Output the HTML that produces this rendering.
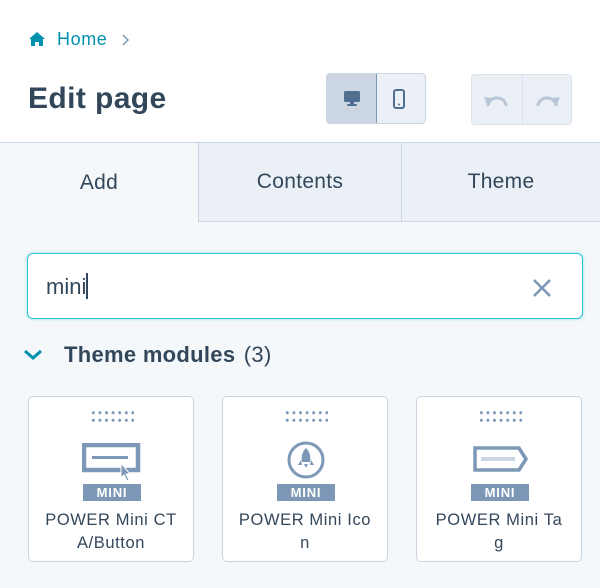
<!DOCTYPE html><html><head><style>
*{box-sizing:border-box;margin:0;padding:0}
body{width:600px;height:588px;overflow:hidden;background:#f5f8fa;font-family:"Liberation Sans",sans-serif;color:#33475b;position:relative}
.top{position:absolute;left:0;top:0;width:600px;height:143px;background:#fff;border-bottom:1px solid #cbd6e2}
.abs{position:absolute}
.tab{position:absolute;top:143px;height:79px;font-size:21px;letter-spacing:.3px;display:flex;align-items:center;justify-content:center;border-bottom:1px solid #cbd6e2}
.card{position:absolute;top:396px;width:166px;height:166px;background:#fff;border:1px solid #cbd6e2;border-radius:5px}
.dots{position:absolute;left:61px;top:12px;width:44px;height:14px;background-image:radial-gradient(circle,#7c98b6 1.4px,transparent 1.7px);background-size:6.6px 7.5px}
.mini{position:absolute;left:54px;top:87px;width:58px;height:17px;background:#7c98b6;color:#fff;font-weight:bold;font-size:13px;text-align:center;line-height:17px;letter-spacing:.8px}
.lbl{position:absolute;left:0;top:112px;width:100%;text-align:center;font-size:16.5px;letter-spacing:.6px;line-height:23px;white-space:nowrap}
</style></head><body>
<div class="top"></div>
<svg class="abs" style="left:29px;top:32px" width="16" height="14" viewBox="0 0 16 14"><path d="M8 0L0 7h2v7h4v-4h4v4h4V7h2z" fill="#0091ae"/></svg>
<div class="abs" style="left:57px;top:29px;font-size:18px;letter-spacing:.6px;color:#0091ae">Home</div>
<svg class="abs" style="left:121px;top:34px" width="8" height="12"><path d="M2 1l5 5-5 5" stroke="#7c98b6" stroke-width="1.5" fill="none"/></svg>
<div class="abs" style="left:28px;top:82px;font-size:30px;letter-spacing:.4px;font-weight:bold;color:#33475b">Edit page</div>
<div class="abs" style="left:326px;top:73px;width:100px;height:51px;border:1px solid #cbd6e2;border-radius:4px;background:#eaf0f6;overflow:hidden">
<div style="position:absolute;left:0;top:0;width:50px;height:51px;background:#cbd6e2;border-right:1px solid #7c98b6"></div>
<svg style="position:absolute;left:16px;top:16px" width="18" height="18"><rect x="1" y="1" width="16" height="11" rx="1.5" fill="#516f90"/><rect x="7" y="12" width="4" height="2" fill="#516f90"/><rect x="4" y="14" width="10" height="2" rx="1" fill="#516f90"/></svg>
<svg style="position:absolute;left:66px;top:15px" width="12" height="20"><rect x="1" y="1" width="10" height="18" rx="2" stroke="#516f90" stroke-width="2" fill="none"/><circle cx="6" cy="15.5" r="1" fill="#516f90"/></svg>
</div>
<div class="abs" style="left:471px;top:74px;width:101px;height:51px;border:1px solid #dbe3ec;border-radius:4px;background:#eaf0f6">
<div style="position:absolute;left:50px;top:0;width:1px;height:49px;background:#dbe3ec"></div>
<svg style="position:absolute;left:12px;top:18px" width="26" height="16"><path d="M4 13a9 8 0 0 1 18 0" stroke="#b8c7d8" stroke-width="3" fill="none"/><path d="M0 4l8 1-5 7z" fill="#b8c7d8"/></svg>
<svg style="position:absolute;left:62px;top:18px" width="26" height="16"><path d="M4 13a9 8 0 0 1 18 0" stroke="#b8c7d8" stroke-width="3" fill="none"/><path d="M26 4l-8 1 5 7z" fill="#b8c7d8"/></svg>
</div>
<div class="tab" style="left:0;width:198px;background:#f5f8fa;border-bottom:none">Add</div>
<div class="tab" style="left:198px;width:203px;background:#eaf0f6;border-left:1px solid #cbd6e2">Contents</div>
<div class="tab" style="left:401px;width:199px;background:#eaf0f6;border-left:1px solid #cbd6e2">Theme</div>
<div class="abs" style="left:27px;top:253px;width:556px;height:66px;background:#fff;border:1px solid #2fc6dc;border-radius:6px;box-shadow:0 0 3px #8be0ec"></div>
<div class="abs" style="left:46px;top:273px;font-size:22px">mini<span style="display:inline-block;width:1.5px;height:26px;background:#33475b;vertical-align:-5px"></span></div>
<svg class="abs" style="left:532px;top:278px" width="20" height="20"><path d="M2 2l16 16M18 2L2 18" stroke="#7c98b6" stroke-width="2.6"/></svg>
<svg class="abs" style="left:23px;top:349px" width="20" height="12"><path d="M2 2l8 7 8-7" stroke="#0091ae" stroke-width="3" fill="none"/></svg>
<div class="abs" style="left:64px;top:342px;font-size:22px;letter-spacing:.3px;font-weight:bold">Theme modules <span style="font-weight:normal;margin-left:2px">(3)</span></div>

<div class="card" style="left:28px"><div class="dots"></div>
<svg style="position:absolute;left:53px;top:46px" width="60" height="40"><rect x="2" y="2" width="54" height="25" fill="none" stroke="#7c98b6" stroke-width="4.5"/><rect x="10" y="13" width="36" height="3" fill="#7c98b6"/><path d="M39 20v15l3-3 3 6 2-1-3-6h4z" fill="#7c98b6" stroke="#fff" stroke-width="1"/></svg>
<div class="mini">MINI</div><div class="lbl">POWER Mini CT<br>A/Button</div></div>

<div class="card" style="left:222px"><div class="dots"></div>
<svg style="position:absolute;left:63px;top:43px" width="40" height="40"><circle cx="20" cy="20" r="17" fill="none" stroke="#7c98b6" stroke-width="3"/><path d="M20 8c-4 4-5 9-4 14h8c1-5 0-10-4-14z M15 20l-3 5h4z M25 20l3 5h-4z M18 24h4l-2 4z" fill="#7c98b6"/></svg>
<div class="mini">MINI</div><div class="lbl">POWER Mini Ico<br>n</div></div>

<div class="card" style="left:416px"><div class="dots"></div>
<svg style="position:absolute;left:56px;top:49px" width="58" height="30"><path d="M2 2h44l7 11-7 11H2z" fill="none" stroke="#7c98b6" stroke-width="3.5"/><rect x="8" y="11" width="34" height="4" fill="#cbd6e2"/></svg>
<div class="mini">MINI</div><div class="lbl">POWER Mini Ta<br>g</div></div>
</body></html>
